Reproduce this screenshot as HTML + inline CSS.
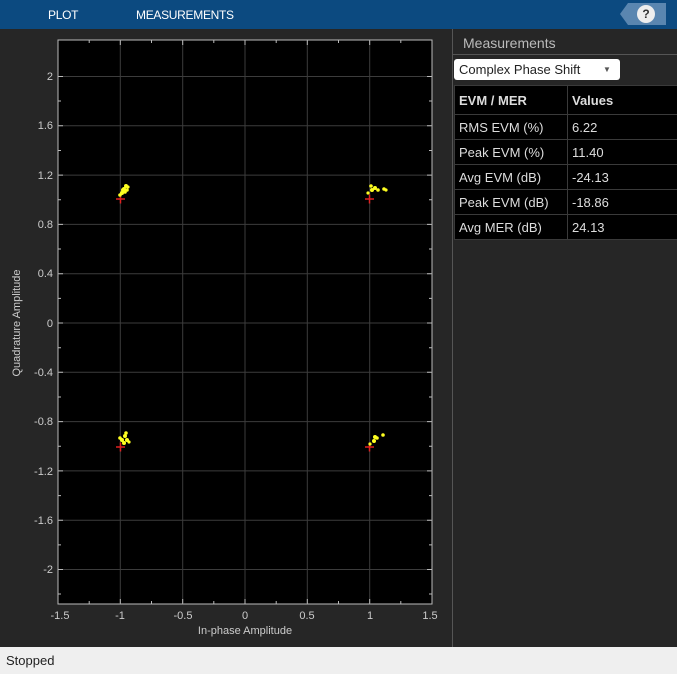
<!DOCTYPE html>
<html><head><style>
body{margin:0;width:677px;height:674px;overflow:hidden;background:#262626;font-family:"Liberation Sans",sans-serif;position:relative}
.top{position:absolute;left:0;top:0;width:677px;height:29px;background:#0c4a80}
.top span{position:absolute;top:8px;color:#fff;font-size:12px;letter-spacing:-0.3px}
.status{position:absolute;left:0;top:647px;width:677px;height:27px;background:#efefef;font-size:13px;color:#222}
.rp{position:absolute;left:452px;top:29px;width:225px;height:618px;background:#262626;border-left:1px solid #555}
table{border-collapse:collapse;position:absolute;left:1px;top:56px;width:224px;background:#000;font-size:13px;color:#ddd}
td{border:1px solid #3a3a3a;height:24px;padding:0 4px}
</style></head><body>
<div class="top"><span style="left:48px">PLOT</span><span style="left:136px">MEASUREMENTS</span>
<div style="position:absolute;left:620px;top:3px;width:46px;height:22px;background:#5a86b0;clip-path:polygon(8px 0,100% 0,100% 100%,8px 100%,0 50%)"></div>
<div style="position:absolute;left:637px;top:5px;width:18px;height:18px;border-radius:50%;background:#eee;color:#333;font-weight:bold;font-size:12px;text-align:center;line-height:18px">?</div></div>
<svg style="position:absolute;left:0;top:29px" width="452" height="618">
<rect x="3" y="0" width="449" height="618" fill="#262626"/>
<g transform="translate(0,-29)">
<rect x="58" y="40" width="374" height="564" fill="#000" stroke="#bbb" stroke-width="1"/>
<g stroke="#3c3c3c" stroke-width="1">
<line x1="120.3" y1="40" x2="120.3" y2="604"/><line x1="182.7" y1="40" x2="182.7" y2="604"/><line x1="245" y1="40" x2="245" y2="604"/><line x1="307.3" y1="40" x2="307.3" y2="604"/><line x1="369.7" y1="40" x2="369.7" y2="604"/>
<line x1="58" y1="76.5" x2="432" y2="76.5"/><line x1="58" y1="125.8" x2="432" y2="125.8"/><line x1="58" y1="175.1" x2="432" y2="175.1"/><line x1="58" y1="224.4" x2="432" y2="224.4"/><line x1="58" y1="273.7" x2="432" y2="273.7"/><line x1="58" y1="323" x2="432" y2="323"/><line x1="58" y1="372.3" x2="432" y2="372.3"/><line x1="58" y1="421.6" x2="432" y2="421.6"/><line x1="58" y1="470.9" x2="432" y2="470.9"/><line x1="58" y1="520.2" x2="432" y2="520.2"/><line x1="58" y1="569.5" x2="432" y2="569.5"/>
</g>
<g stroke="#bbb" stroke-width="1">
<path d="M89.2 604v-3M120.3 604v-5M151.5 604v-3M182.7 604v-5M213.8 604v-3M245 604v-5M276.2 604v-3M307.3 604v-5M338.5 604v-3M369.7 604v-5M400.8 604v-3
M89.2 40v3M120.3 40v5M151.5 40v3M182.7 40v5M213.8 40v3M245 40v5M276.2 40v3M307.3 40v5M338.5 40v3M369.7 40v5M400.8 40v3
M58 76.5h5M58 101h3M58 125.8h5M58 150.5h3M58 175.1h5M58 199.8h3M58 224.4h5M58 249h3M58 273.7h5M58 298.4h3M58 323h5M58 347.7h3M58 372.3h5M58 397h3M58 421.6h5M58 446.3h3M58 470.9h5M58 495.6h3M58 520.2h5M58 544.9h3M58 569.5h5M58 594h3
M432 76.5h-5M432 101h-3M432 125.8h-5M432 150.5h-3M432 175.1h-5M432 199.8h-3M432 224.4h-5M432 249h-3M432 273.7h-5M432 298.4h-3M432 323h-5M432 347.7h-3M432 372.3h-5M432 397h-3M432 421.6h-5M432 446.3h-3M432 470.9h-5M432 495.6h-3M432 520.2h-5M432 544.9h-3M432 569.5h-5M432 594h-3"/>
</g>
<g font-size="11" fill="#ccc" text-anchor="end">
<text x="53" y="80">2</text><text x="53" y="129">1.6</text><text x="53" y="179">1.2</text><text x="53" y="228">0.8</text><text x="53" y="277">0.4</text><text x="53" y="327">0</text><text x="53" y="376">-0.4</text><text x="53" y="425">-0.8</text><text x="53" y="475">-1.2</text><text x="53" y="524">-1.6</text><text x="53" y="573">-2</text>
</g>
<g font-size="11" fill="#ccc" text-anchor="middle">
<text x="60" y="619">-1.5</text><text x="120" y="619">-1</text><text x="183" y="619">-0.5</text><text x="245" y="619">0</text><text x="307" y="619">0.5</text><text x="370" y="619">1</text><text x="430" y="619">1.5</text>
<text x="245" y="634">In-phase Amplitude</text>
<text transform="translate(20,323) rotate(-90)">Quadrature Amplitude</text>
</g>
<g stroke="#e02020" stroke-width="1.5">
<path d="M116 199h9M120.5 194.5v9M365 199h9M369.5 194.5v9M116 447h9M120.5 442.5v9M365 447h9M369.5 442.5v9"/>
</g>
<g fill="#ffff20">
<circle cx="122" cy="193" r="2"/><circle cx="124" cy="189" r="2"/><circle cx="126" cy="186" r="2"/><circle cx="123" cy="190" r="2"/><circle cx="127" cy="190" r="1.8"/><circle cx="125" cy="192" r="1.8"/><circle cx="120" cy="195" r="1.8"/><circle cx="128" cy="187" r="1.6"/>
<circle cx="372" cy="190" r="2"/><circle cx="375" cy="188" r="2"/><circle cx="371" cy="186" r="1.8"/><circle cx="378" cy="190" r="1.8"/><circle cx="384" cy="189" r="1.8"/><circle cx="386" cy="190" r="1.6"/><circle cx="368" cy="193" r="1.6"/>
<circle cx="122" cy="440" r="2"/><circle cx="125" cy="436" r="2"/><circle cx="127" cy="440" r="2"/><circle cx="124" cy="443" r="2"/><circle cx="120" cy="438" r="1.8"/><circle cx="126" cy="433" r="1.8"/><circle cx="129" cy="442" r="1.6"/>
<circle cx="374" cy="441" r="2"/><circle cx="375" cy="437" r="2"/><circle cx="377" cy="438" r="1.8"/><circle cx="383" cy="435" r="1.8"/><circle cx="370" cy="444" r="1.6"/>
</g>
</g>
</svg>
<div class="rp">
<div style="position:absolute;left:10px;top:6px;color:#bbb;font-size:14px">Measurements</div>
<div style="position:absolute;left:0;top:25px;width:225px;border-top:1px solid #555"></div>
<div style="position:absolute;left:1px;top:30px;width:166px;height:21px;background:#fff;border-radius:3px;font-size:13px;color:#222;line-height:21px;padding-left:5px;box-sizing:border-box">Complex Phase Shift<span style="position:absolute;left:149px;top:0;font-size:8px;color:#555">▼</span></div>
<table>
<tr><td style="width:104px;font-weight:bold;height:28px">EVM / MER</td><td style="font-weight:bold">Values</td></tr>
<tr><td>RMS EVM (%)</td><td>6.22</td></tr>
<tr><td>Peak EVM (%)</td><td>11.40</td></tr>
<tr><td>Avg EVM (dB)</td><td>-24.13</td></tr>
<tr><td>Peak EVM (dB)</td><td>-18.86</td></tr>
<tr><td>Avg MER (dB)</td><td>24.13</td></tr>
</table>
</div>
<div class="status"><span style="position:absolute;left:6px;top:6px">Stopped</span></div>
</body></html>
